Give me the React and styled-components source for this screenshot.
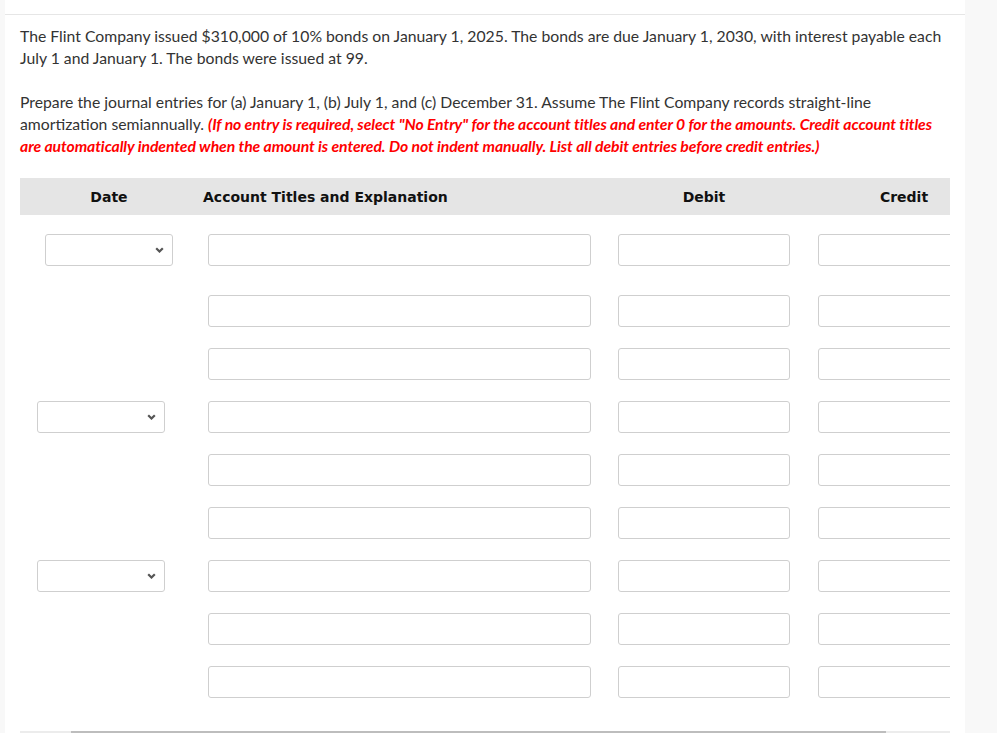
import React from 'react';
import styled, { createGlobalStyle } from 'styled-components';

const GlobalStyle = createGlobalStyle`
  html, body {
    margin: 0;
    padding: 0;
    background: #f8f8f8;
    overflow: hidden;
  }
  body {
    font-family: Lato, "Open Sans", sans-serif;
    color: #333;
  }
`;

const Page = styled.div`
  width: 960px;
  height: 733px;
  margin-left: 5px;
  background: #fff;
  overflow: hidden;
`;

const TopRule = styled.div`
  height: 14px;
  border-bottom: 1px solid #e6e6e6;
`;

const Body = styled.div`
  padding: 10px 15px 0 15px;
`;

const Para = styled.p`
  margin: 0 0 ${p => (p.$last ? '21px' : '22px')} 0;
  width: 930px;
  font-size: 15.75px;
  line-height: 22px;
  color: #333;
`;

const Note = styled.span`
  color: #ff0000;
  font-weight: 700;
  font-style: italic;
  letter-spacing: -0.08px;
`;

const TableClip = styled.div`
  width: 930px;
  overflow: hidden;
`;

const Grid = styled.div`
  display: grid;
  grid-template-columns: 178px 406px 200px 200px;
  width: 984px;
`;

const HeadRow = styled(Grid)`
  height: 37px;
  background: #e5e5e5;
  align-items: center;
  font-family: "DejaVu Sans", Verdana, sans-serif;
  font-size: 14px;
  font-weight: 700;
  color: #111;
`;

const HeadCell = styled.div`
  text-align: ${p => (p.$left ? 'left' : 'center')};
  padding-left: ${p => (p.$left ? '5px' : '0')};
`;

const Rows = styled.div`
  display: flex;
  flex-direction: column;
  gap: 21px;
  padding-top: 19px;
`;

const Row = styled(Grid)`
  height: 32px;
  margin-bottom: ${p => (p.$extra ? '8px' : '0')};
`;

const DateCell = styled.div`
  padding-left: ${p => (p.$indent ? '17px' : '25px')};
`;

const SelectWrap = styled.div`
  position: relative;
  width: 128px;
  height: 32px;
`;

const Select = styled.select`
  appearance: none;
  -webkit-appearance: none;
  box-sizing: border-box;
  width: 100%;
  height: 100%;
  border: 1px solid #cfcfcf;
  border-radius: 3px;
  background: #fff;
  font-family: inherit;
  font-size: 14px;
  outline: 0;
`;

const Chevron = styled.svg`
  position: absolute;
  right: 9px;
  top: 13px;
  pointer-events: none;
`;

const AccountCell = styled.div`
  padding-left: 10px;
`;

const AmountCell = styled.div`
  display: flex;
  justify-content: center;
`;

const Input = styled.input`
  box-sizing: border-box;
  width: ${p => p.$w}px;
  height: 32px;
  border: 1px solid #cfcfcf;
  border-radius: 3px;
  background: #fff;
  font-family: inherit;
  font-size: 14px;
  outline: 0;
`;

const ScrollTrack = styled.div`
  display: flex;
  width: 930px;
  height: 6px;
  margin-top: 33px;
  background: #ececec;
`;

const ScrollThumb = styled.div`
  width: 815px;
  margin-left: 51px;
  background: #bdbdbd;
`;

const rows = [
  { date: true, extra: true },
  {},
  {},
  { date: true, indent: true },
  {},
  {},
  { date: true, indent: true },
  {},
  {},
];

const DateSelect = () => (
  <SelectWrap>
    <Select defaultValue="">
      <option value="" />
    </Select>
    <Chevron width="9" height="6" viewBox="0 0 9 6">
      <path d="M1.2 1.2 L4.5 4.5 L7.8 1.2" fill="none" stroke="#555" strokeWidth="2.2" />
    </Chevron>
  </SelectWrap>
);

export default function App() {
  return (
    <>
      <GlobalStyle />
      <Page>
        <TopRule />
        <Body>
          <Para>
            The Flint Company issued $310,000 of 10% bonds on January 1, 2025. The bonds are due January 1, 2030, with
            interest payable each July 1 and January 1. The bonds were issued at 99.
          </Para>
          <Para $last>
            Prepare the journal entries for (a) January 1, (b) July 1, and (c) December 31. Assume The Flint Company
            records straight-line amortization semiannually.{' '}
            <Note>
              (If no entry is required, select "No Entry" for the account titles and enter 0 for the amounts. Credit
              account titles are automatically indented when the amount is entered. Do not indent manually. List all
              debit entries before credit entries.)
            </Note>
          </Para>
          <TableClip>
            <HeadRow>
              <HeadCell>Date</HeadCell>
              <HeadCell $left>Account Titles and Explanation</HeadCell>
              <HeadCell>Debit</HeadCell>
              <HeadCell>Credit</HeadCell>
            </HeadRow>
            <Rows>
              {rows.map((r, i) => (
                <Row key={i} $extra={r.extra}>
                  <DateCell $indent={r.indent}>{r.date && <DateSelect />}</DateCell>
                  <AccountCell>
                    <Input $w={383} />
                  </AccountCell>
                  <AmountCell>
                    <Input $w={172} />
                  </AmountCell>
                  <AmountCell>
                    <Input $w={172} />
                  </AmountCell>
                </Row>
              ))}
            </Rows>
            <ScrollTrack>
              <ScrollThumb />
            </ScrollTrack>
          </TableClip>
        </Body>
      </Page>
    </>
  );
}
